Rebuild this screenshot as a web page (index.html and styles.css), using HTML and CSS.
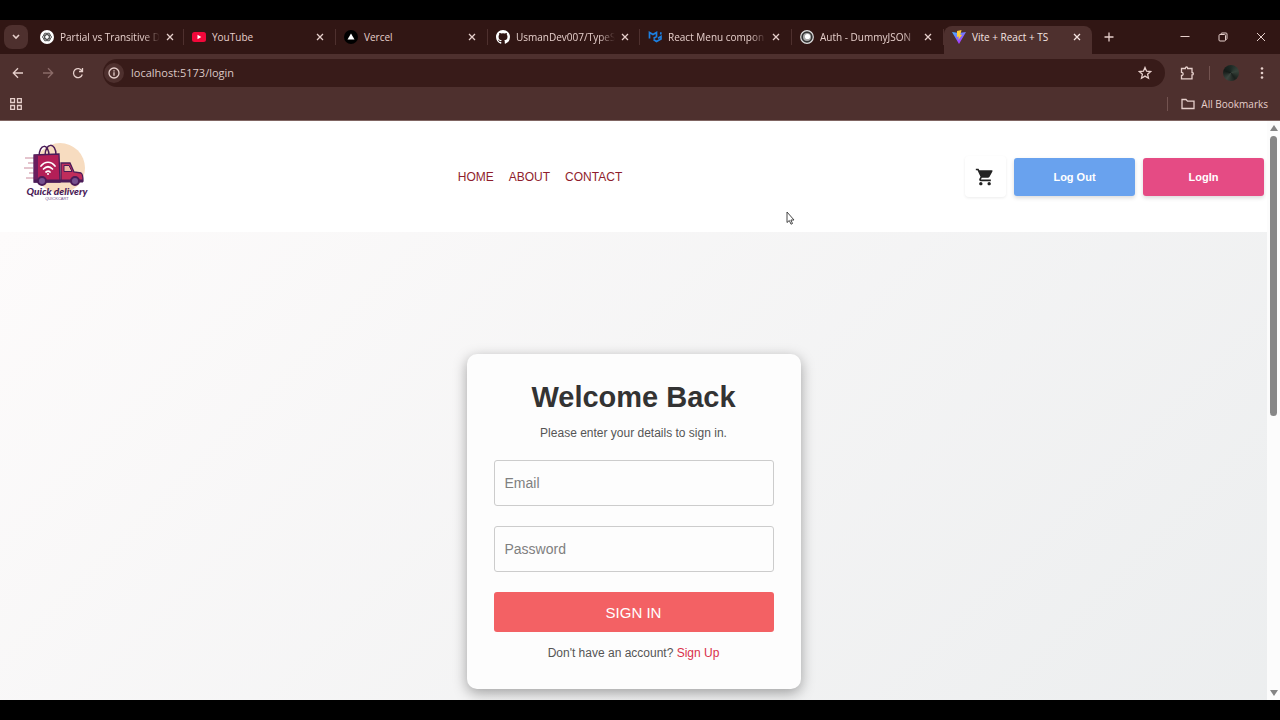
FILE: index.html
```html
<!DOCTYPE html>
<html lang="en">
<head>
  <meta charset="UTF-8">
  <title>Vite + React + TS</title>
  <link rel="stylesheet" href="styles.css">
</head>
<body>
  <div class="browser">
    <div class="tab-strip">
      <button class="tab-search" aria-label="Search tabs">
        <svg width="8" height="6" viewBox="0 0 8 6"><path d="M1 1l3 3 3-3" fill="none" stroke="currentColor" stroke-width="1.6"/></svg>
      </button>

      <div class="tab">
        <svg class="tab-icon" viewBox="0 0 14 14"><circle cx="7" cy="7" r="7" fill="#fff"/><g fill="none" stroke="#333" stroke-width=".8"><ellipse cx="7" cy="7" rx="4.4" ry="2.2"/><ellipse cx="7" cy="7" rx="4.4" ry="2.2" transform="rotate(60 7 7)"/><ellipse cx="7" cy="7" rx="4.4" ry="2.2" transform="rotate(120 7 7)"/></g></svg>
        <span class="tab-title faded">Partial vs Transitive D</span>
        <button class="tab-close" aria-label="Close tab"><svg width="8" height="8" viewBox="0 0 8 8"><path d="M1 1l6 6M7 1l-6 6"/></svg></button>
      </div>
      <div class="tab">
        <svg class="tab-icon" viewBox="0 0 14 14"><rect y="2" width="14" height="10" rx="2.5" fill="#f1083a"/><path d="M5.5 4.8v4.4L9.3 7z" fill="#fff"/></svg>
        <span class="tab-title">YouTube</span>
        <button class="tab-close" aria-label="Close tab"><svg width="8" height="8" viewBox="0 0 8 8"><path d="M1 1l6 6M7 1l-6 6"/></svg></button>
      </div>
      <div class="tab">
        <svg class="tab-icon" viewBox="0 0 14 14"><circle cx="7" cy="7" r="7" fill="#000"/><path d="M7 3.5L10.5 9.5h-7z" fill="#fff"/></svg>
        <span class="tab-title">Vercel</span>
        <button class="tab-close" aria-label="Close tab"><svg width="8" height="8" viewBox="0 0 8 8"><path d="M1 1l6 6M7 1l-6 6"/></svg></button>
      </div>
      <div class="tab">
        <svg class="tab-icon" viewBox="0 0 16 16"><path fill="#fff" d="M8 0C3.58 0 0 3.58 0 8c0 3.54 2.29 6.53 5.47 7.59.4.07.55-.17.55-.38v-1.49c-2.01.37-2.53-.49-2.69-.94-.09-.23-.48-.94-.82-1.13-.28-.15-.68-.52-.01-.53.63-.01 1.08.58 1.23.82.72 1.21 1.87.87 2.33.66.07-.52.28-.87.51-1.07-1.78-.2-3.64-.89-3.64-3.95 0-.87.31-1.59.82-2.15-.08-.2-.36-1.02.08-2.12 0 0 .67-.21 2.2.82a7.42 7.42 0 014 0c1.53-1.04 2.2-.82 2.2-.82.44 1.1.16 1.92.08 2.12.51.56.82 1.27.82 2.15 0 3.07-1.87 3.75-3.65 3.95.29.25.54.73.54 1.48v2.2c0 .21.15.46.55.38A8.01 8.01 0 0016 8c0-4.42-3.58-8-8-8z"/></svg>
        <span class="tab-title faded">UsmanDev007/TypeS</span>
        <button class="tab-close" aria-label="Close tab"><svg width="8" height="8" viewBox="0 0 8 8"><path d="M1 1l6 6M7 1l-6 6"/></svg></button>
      </div>
      <div class="tab">
        <svg class="tab-icon" viewBox="0 0 14 14"><path d="M1.500 8.500v-6l3.500 2 3.500-2v4L5.500 8.500M5.500 9.500l3 2L13 9V6.500l-3 1.800M12.800 2.200v2.300" fill="none" stroke="#1c7fe0" stroke-width="1.700"/></svg>
        <span class="tab-title faded">React Menu compon</span>
        <button class="tab-close" aria-label="Close tab"><svg width="8" height="8" viewBox="0 0 8 8"><path d="M1 1l6 6M7 1l-6 6"/></svg></button>
      </div>
      <div class="tab">
        <svg class="tab-icon" viewBox="0 0 14 14"><circle cx="7" cy="7" r="6.300" fill="#333" stroke="#ddd" stroke-width="1.200"/><circle cx="7" cy="7" r="4" fill="#aaa"/><circle cx="7.500" cy="6.500" r="2.600" fill="#fff"/></svg>
        <span class="tab-title faded">Auth - DummyJSON</span>
        <button class="tab-close" aria-label="Close tab"><svg width="8" height="8" viewBox="0 0 8 8"><path d="M1 1l6 6M7 1l-6 6"/></svg></button>
      </div>
      <div class="tab active">
        <svg class="tab-icon" viewBox="0 0 14 14">
          <defs><linearGradient id="vite" x1="0" y1="0" x2=".6" y2="1"><stop offset="0" stop-color="#41b6ff"/><stop offset="1" stop-color="#b42cff"/></linearGradient></defs>
          <path d="M0 2l7 1 7-1-7 12z" fill="url(#vite)"/><path d="M9.500 0L5 1v6l1.800-.4L6.300 10l3.900-5.300-1.900.3z" fill="#ffcb32"/>
        </svg>
        <span class="tab-title">Vite + React + TS</span>
        <button class="tab-close" aria-label="Close tab"><svg width="8" height="8" viewBox="0 0 8 8"><path d="M1 1l6 6M7 1l-6 6"/></svg></button>
      </div>

      <button class="new-tab" aria-label="New tab"><svg width="10" height="10" viewBox="0 0 10 10"><path d="M5 .5v9M.5 5h9" stroke="currentColor" stroke-width="1.300"/></svg></button>

      <div class="window-buttons">
        <button aria-label="Minimize"><svg width="10" height="10" viewBox="0 0 10 10"><path d="M.5 4.500h9"/></svg></button>
        <button aria-label="Restore"><svg width="10" height="10" viewBox="0 0 10 10"><rect x="1" y="2.500" width="6.500" height="6.500" rx="1"/><path d="M3 2.500V2a1 1 0 011-1h4a1 1 0 011 1v4.500a1 1 0 01-1 1h-.5"/></svg></button>
        <button aria-label="Close"><svg width="10" height="10" viewBox="0 0 10 10"><path d="M1 1l8 8M9 1l-8 8"/></svg></button>
      </div>
    </div>

    <div class="toolbar">
      <button class="tool" aria-label="Back"><svg width="12" height="12" viewBox="0 0 12 12"><path d="M11 6H1.500M6 1.300L1.300 6 6 10.700"/></svg></button>
      <button class="tool disabled" aria-label="Forward"><svg width="12" height="12" viewBox="0 0 12 12"><path d="M1 6h9.500M6 1.300L10.700 6 6 10.700"/></svg></button>
      <button class="tool" aria-label="Reload"><svg width="12" height="12" viewBox="0 0 12 12"><path d="M10.300 7.500A4.500 4.500 0 1110 4M10.500 1v3.500H7"/></svg></button>
      <div class="address-bar">
        <span class="site-info"><svg width="12" height="12" viewBox="0 0 12 12"><circle cx="6" cy="6" r="5"/><path d="M6 5.300v3.400M6 3.200v1.200"/></svg></span>
        <input type="text" value="localhost:5173/login" aria-label="Address">
        <button class="star" aria-label="Bookmark this tab"><svg width="14" height="14" viewBox="0 0 14 14"><path d="M7 1.500l1.600 3.700 4 .4-3 2.700.9 3.900L7 10.100l-3.500 2.100.9-3.900-3-2.700 4-.4z"/></svg></button>
      </div>
      <button class="tool extensions" aria-label="Extensions"><svg width="16" height="16" viewBox="0 0 16 16"><path d="M2.500 3.500h3.800c0-2 2.400-2 2.400 0H13V7.500c1.800 0 1.800 2.400 0 2.400v4H2.500v-3.400c2.200 0 2.200-3.200 0-3.200z"/></svg></button>
      <span class="divider"></span>
      <span class="avatar"></span>
      <button class="tool" aria-label="Menu"><svg width="4" height="14" viewBox="0 0 4 14"><g fill="currentColor" stroke="none"><circle cx="2" cy="2.500" r="1.300"/><circle cx="2" cy="7" r="1.300"/><circle cx="2" cy="11.500" r="1.300"/></g></svg></button>
    </div>

    <div class="bookmarks">
      <button class="tool apps" aria-label="Apps"><svg width="12" height="12" viewBox="0 0 12 12"><path d="M.7.7h3.800v3.800H.7zM7.500.7h3.800v3.800H7.500zM.7 7.500h3.800v3.800H.7zM7.500 7.500h3.800v3.800H7.500z"/></svg></button>
      <span class="divider"></span>
      <button class="all-bookmarks">
        <svg width="14" height="12" viewBox="0 0 14 12"><path d="M1 10.500V1.500h4l1.500 1.700H13v7.300z"/></svg>
        All Bookmarks
      </button>
    </div>

    <div class="viewport">
      <div class="page">
        <header class="header">
          <a class="logo" href="#" aria-label="Quick delivery">
            <svg width="68" height="65" viewBox="0 0 68 65">
              <circle cx="36" cy="24" r="25" fill="#f7dcc0"/>
              <path d="M1 14h9M4 19h6M0 24h9M5 29h5M2 34h8" stroke="#c98a9c" stroke-width="1"/>
              <path d="M15 13C15-1 25-1 25 12M21 12C21-2 32-2 32 11" fill="none" stroke="#4b1c58" stroke-width="1.500"/>
              <path d="M10 11l25-1 1 28H10z" fill="#b31f57" stroke="#4b1c58" stroke-width="1.300"/>
              <path d="M10 11l4 1v26h-4z" fill="#6b1d5e"/>
              <g fill="none" stroke="#fff" stroke-width="1.700" stroke-linecap="round"><path d="M17 22c4-5 10-5 14 0M19.500 25c3-3 6-3 9 0M22 28c1.500-1.300 3-1.300 4 0"/></g>
              <circle cx="24" cy="30" r="1" fill="#fff"/>
              <path d="M37 37V19h9l4 9 7 1q2 1 2 8z" fill="#c02d5b" stroke="#4b1c58" stroke-width="1.300"/>
              <path d="M40 21.500h5l3 6h-8z" fill="#efb8a5" stroke="#4b1c58"/>
              <path d="M10 37h49" stroke="#4b1c58" stroke-width="3"/>
              <g fill="#76518f" stroke="#4b1c58" stroke-width="2"><circle cx="18" cy="37" r="4"/><circle cx="51" cy="37" r="4"/></g>
              <text class="logo-name" x="33" y="51" text-anchor="middle">Quick delivery</text>
              <text class="logo-sub" x="33" y="56" text-anchor="middle">QUICKCART</text>
            </svg>
          </a>
          <nav class="nav">
            <a href="#">HOME</a>
            <a href="#">ABOUT</a>
            <a href="#">CONTACT</a>
          </nav>
          <div class="actions">
            <button class="cart" aria-label="Cart">
              <svg width="20" height="20" viewBox="0 0 24 24"><path fill="#222" d="M7 18c-1.100 0-1.990.9-1.990 2S5.900 22 7 22s2-.9 2-2-.9-2-2-2zM1 2v2h2l3.600 7.590-1.350 2.450c-.16.28-.25.61-.25.96 0 1.100.9 2 2 2h12v-2H7.420c-.14 0-.25-.11-.25-.25l.03-.12.900-1.630h7.450c.75 0 1.410-.41 1.750-1.030l3.580-6.490A1 1 0 0020 4H5.210l-.94-2H1zm16 16c-1.100 0-1.990.9-1.990 2s.89 2 1.990 2 2-.9 2-2-.9-2-2-2z"/></svg>
            </button>
            <button class="btn btn-logout">Log Out</button>
            <button class="btn btn-login">LogIn</button>
          </div>
        </header>

        <main class="login">
          <form class="card">
            <h1>Welcome Back</h1>
            <p class="subtitle">Please enter your details to sign in.</p>
            <input type="email" placeholder="Email" aria-label="Email">
            <input type="password" placeholder="Password" aria-label="Password">
            <button type="submit">SIGN IN</button>
            <p class="signup">Don't have an account? <a href="#">Sign Up</a></p>
          </form>
        </main>
      </div>

      <div class="scrollbar">
        <svg width="10" height="8" viewBox="0 0 10 8"><path d="M5 1l4 6H1z" fill="#858585"/></svg>
        <div class="track"><div class="thumb"></div></div>
        <svg width="10" height="8" viewBox="0 0 10 8"><path d="M5 7l4-6H1z" fill="#858585"/></svg>
      </div>
    </div>
  </div>

  <svg class="cursor" width="9" height="15" viewBox="0 0 9 15"><path d="M1 1v10.500l2.300-2 1.700 3.700 1.500-.7-1.600-3.500H8z" fill="#fff" stroke="#333" stroke-width=".9"/></svg>
</body>
</html>
```
FILE: styles.css
```css
* {
  box-sizing: border-box;
}

body {
  margin: 0;
  background-color: #000;
  font-family: "Liberation Sans", Arial, sans-serif;
}

button {
  padding: 0;
  border: none;
  background: none;
  color: inherit;
  font-family: inherit;
  cursor: pointer;
}

a {
  text-decoration: none;
}

svg {
  flex-shrink: 0;
}

/* browser window */

.browser {
  display: flex;
  flex-direction: column;
  height: 100vh;
  padding: 20px 0;
}

.tab-strip,
.toolbar,
.bookmarks {
  display: flex;
  align-items: center;
  flex-shrink: 0;
  color: #e6cfcb;
  font-family: "Open Sans", "Noto Sans", sans-serif;
}

.tab-strip {
  height: 34px;
  background-color: #311614;
}

.tab-search {
  width: 24px;
  height: 24px;
  margin: 0 4px;
  border-radius: 8px;
  background-color: #4e302e;
  display: flex;
  align-items: center;
  justify-content: center;
}

.tab {
  display: flex;
  align-items: center;
  gap: 6px;
  flex: 0 1 152px;
  min-width: 0;
  height: 16px;
  padding: 0 11px 0 8px;
  border-right: 1px solid #4e302e;
}

.tab.active {
  height: 28px;
  flex-basis: 148px;
  align-self: flex-end;
  padding-bottom: 6px;
  border: none;
  border-radius: 8px 8px 0 0;
  background-color: #4e302e;
  color: #f5e4e1;
}

.tab-icon {
  width: 14px;
  height: 14px;
}

.tab-title {
  flex: 1;
  white-space: nowrap;
  font-size: 10px;
  line-height: 16px;
}

.tab-title.faded {
  mask-image: linear-gradient(to right, #000 84%, transparent);
}

.tab-close {
  display: flex;
}

.tab-close svg {
  fill: none;
  stroke: currentColor;
  stroke-width: 1.3;
}

.new-tab {
  display: flex;
  margin-left: 12px;
}

.window-buttons {
  display: flex;
  gap: 28px;
  margin-left: auto;
  padding-right: 14px;
}

.window-buttons button {
  display: flex;
}

.window-buttons svg {
  fill: none;
  stroke: currentColor;
}

.toolbar {
  height: 37px;
  padding: 0 3px;
  background-color: #4e302e;
}

.tool {
  display: flex;
  align-items: center;
  justify-content: center;
  width: 30px;
  height: 28px;
}

.tool svg,
.address-bar svg,
.all-bookmarks svg {
  fill: none;
  stroke: currentColor;
  stroke-width: 1.3;
}

.tool.disabled {
  color: #8b6b68;
}

.address-bar {
  display: flex;
  align-items: center;
  flex: 1;
  height: 28px;
  margin-left: 10px;
  padding: 0 13px 0 1px;
  border-radius: 14px;
  background-color: #381b19;
}

.site-info {
  display: flex;
  align-items: center;
  justify-content: center;
  width: 20px;
  height: 20px;
  border-radius: 50%;
  background-color: #4e302e;
}

.address-bar input {
  flex: 1;
  margin-left: 7px;
  padding: 0;
  border: none;
  outline: none;
  background: none;
  color: #dcc8c5;
  font-family: inherit;
  font-size: 11px;
}

.star {
  display: flex;
}

.extensions {
  margin-left: 7px;
}

.divider {
  width: 1px;
  height: 14px;
  margin: 0 7px;
  background-color: #735350;
}

.avatar {
  width: 16px;
  height: 16px;
  margin: 0 8px 0 6px;
  border-radius: 50%;
  background: conic-gradient(#1d2a25, #37433b, #19201c, #3b453f, #151b18, #1d2a25);
}

.bookmarks {
  height: 30px;
  padding: 0 12px 4px 1px;
  border-bottom: 1px solid #806562;
  background-color: #4e302e;
}

.bookmarks .divider {
  margin: 0 13px 0 auto;
}

.all-bookmarks {
  display: flex;
  align-items: center;
  gap: 6px;
  font-size: 10px;
}

.viewport {
  display: flex;
  flex: 1;
  min-height: 0;
  background-color: #fff;
}

.page {
  display: flex;
  flex-direction: column;
  flex: 1;
  overflow: hidden;
}

.scrollbar {
  display: flex;
  flex-direction: column;
  align-items: center;
  width: 13px;
  padding: 3px 0;
  background-color: #fcfcfc;
}

.track {
  flex: 1;
  width: 7px;
  padding: 4px 0;
}

.thumb {
  height: 51%;
  border-radius: 4px;
  background-color: #878787;
}

/* header */

.header {
  display: flex;
  align-items: center;
  justify-content: space-between;
  flex-shrink: 0;
  padding: 23px 3px 23px 24px;
  background-color: #fff;
}

.logo {
  display: flex;
  width: 91px;
}

.logo svg {
  overflow: visible;
}

.logo-name {
  fill: #4b1c58;
  font-family: Lato, sans-serif;
  font-size: 10px;
  font-style: italic;
  font-weight: 900;
}

.logo-sub {
  fill: #76518f;
  font-size: 4px;
}

.nav {
  display: flex;
  gap: 15px;
}

.nav a {
  color: #8f1d2c;
  font-size: 12px;
}

.actions {
  display: flex;
  align-items: center;
  gap: 8px;
}

.cart {
  display: flex;
  align-items: center;
  justify-content: center;
  width: 41px;
  height: 41px;
  border-radius: 4px;
  background-color: #fff;
  box-shadow: 0 1px 3px rgba(0, 0, 0, 0.08);
}

.btn {
  width: 121px;
  height: 38px;
  border-radius: 3px;
  color: #fff;
  font-size: 11px;
  font-weight: bold;
  box-shadow: 0 2px 4px rgba(0, 0, 0, 0.15);
}

.btn-logout {
  background-color: #69a2ee;
}

.btn-login {
  background-color: #e54b84;
}

/* login form */

.login {
  display: flex;
  align-items: center;
  justify-content: center;
  flex-shrink: 0;
  height: 100%;
  background: linear-gradient(135deg, #fdfbfb 0%, #ebedee 100%);
}

.card {
  display: flex;
  flex-direction: column;
  width: 334px;
  padding: 27px;
  border-radius: 10px;
  background-color: #fdfdfd;
  box-shadow: 0 4px 14px rgba(0, 0, 0, 0.35);
  text-align: center;
}

.card h1 {
  margin: 0 0 11px;
  color: #333;
  font-size: 29px;
  line-height: 32px;
}

.card p {
  margin: 0;
  color: #555;
  font-size: 12px;
  line-height: 18px;
}

.card .subtitle {
  margin-bottom: 18px;
}

.card input {
  height: 46px;
  margin-bottom: 20px;
  padding: 0 10px;
  border: 1px solid #ccc;
  border-radius: 3px;
  background-color: #fdfdfd;
  font-family: inherit;
  font-size: 14px;
}

.card input::placeholder {
  color: #808080;
}

.card button {
  height: 40px;
  margin-bottom: 12px;
  border-radius: 3px;
  background-color: #f36164;
  color: #fff;
  font-size: 15px;
}

.signup a {
  color: #d9304a;
}

.cursor {
  position: absolute;
  top: 211px;
  left: 786px;
}
```
